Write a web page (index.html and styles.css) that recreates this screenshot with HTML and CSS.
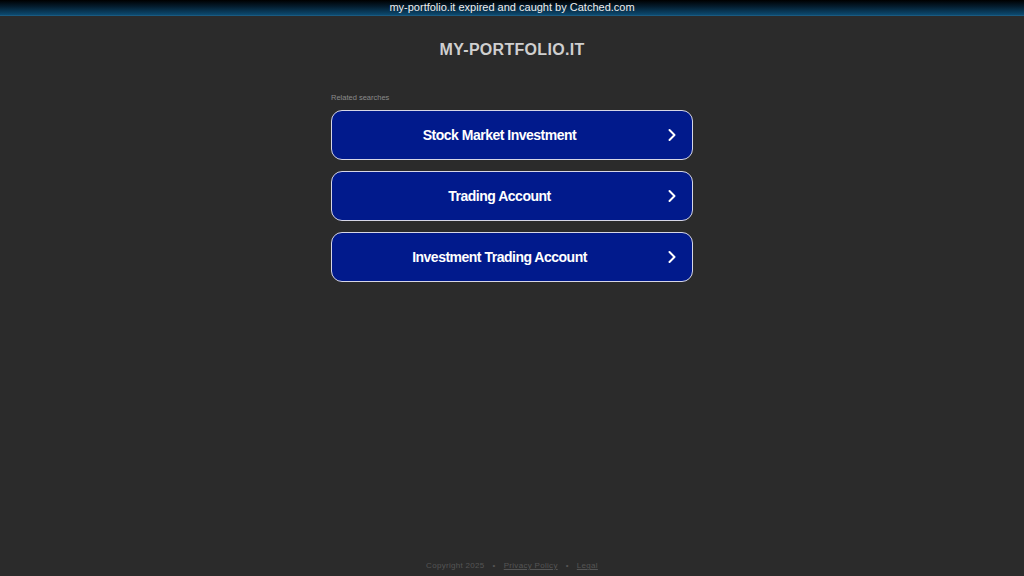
FILE: index.html
```html
<!DOCTYPE html>
<html>
<head>
<meta charset="utf-8">
<link rel="stylesheet" href="styles.css">
</head>
<body>
<div class="topbar">my-portfolio.it expired and caught by Catched.com</div>
<main class="main">
  <h1 class="title">MY-PORTFOLIO.IT</h1>
  <section class="related">
    <div class="related-label">Related searches</div>
    <a class="btn" href="#"><span class="btn-text">Stock Market Investment</span><svg class="chev" viewBox="0 0 10 14" width="10" height="14"><path d="M2.5 2 L7.5 7 L2.5 12" fill="none" stroke="#fff" stroke-width="2" stroke-linecap="round" stroke-linejoin="round"/></svg></a>
    <a class="btn" href="#"><span class="btn-text">Trading Account</span><svg class="chev" viewBox="0 0 10 14" width="10" height="14"><path d="M2.5 2 L7.5 7 L2.5 12" fill="none" stroke="#fff" stroke-width="2" stroke-linecap="round" stroke-linejoin="round"/></svg></a>
    <a class="btn" href="#"><span class="btn-text">Investment Trading Account</span><svg class="chev" viewBox="0 0 10 14" width="10" height="14"><path d="M2.5 2 L7.5 7 L2.5 12" fill="none" stroke="#fff" stroke-width="2" stroke-linecap="round" stroke-linejoin="round"/></svg></a>
  </section>
</main>
<footer class="footer">
  <span>Copyright 2025</span><span class="dot">•</span><a href="#">Privacy Policy</a><span class="dot">•</span><a href="#">Legal</a>
</footer>
</body>
</html>
```
FILE: styles.css
```css
html, body {
  margin: 0;
  padding: 0;
  height: 100%;
}
body {
  background: #2b2b2b;
  font-family: "Liberation Sans", Arial, sans-serif;
  display: flex;
  flex-direction: column;
  min-height: 576px;
}
.topbar {
  height: 16px;
  line-height: 14px;
  font-size: 11px;
  color: #eeeeee;
  text-align: center;
  background: linear-gradient(to bottom, #000 0%, #041a2a 40%, #0c4a70 100%);
  border-bottom: 1px solid #1a5a80;
  box-sizing: border-box;
}
.main {
  flex: 1;
  display: flex;
  flex-direction: column;
  align-items: center;
}
.title {
  margin: 25px 0 0 0;
  font-size: 16px;
  line-height: 18px;
  font-weight: bold;
  color: #cfcfcf;
  letter-spacing: 0.3px;
}
.related {
  width: 362px;
  margin-top: 34px;
  display: flex;
  flex-direction: column;
  gap: 11px;
}
.related-label {
  font-size: 7.5px;
  color: #8a8a8a;
  line-height: 10px;
  margin-bottom: -4px;
}
.btn {
  height: 50px;
  box-sizing: border-box;
  border: 1px solid #d6d6e6;
  border-radius: 11px;
  background: #011a8c;
  display: flex;
  align-items: center;
  justify-content: center;
  position: relative;
  text-decoration: none;
  color: #fff;
}
.btn-text {
  font-size: 14px;
  font-weight: bold;
  letter-spacing: -0.5px;
  margin-left: -25px;
}
.chev {
  position: absolute;
  right: 15px;
  top: 17px;
}
.footer {
  padding-bottom: 5px;
  line-height: 10px;
  text-align: center;
  font-size: 8px;
  color: #555;
  letter-spacing: 0.3px;
}
.footer a {
  color: #555;
}
.dot {
  margin: 0 8px;
}
```
